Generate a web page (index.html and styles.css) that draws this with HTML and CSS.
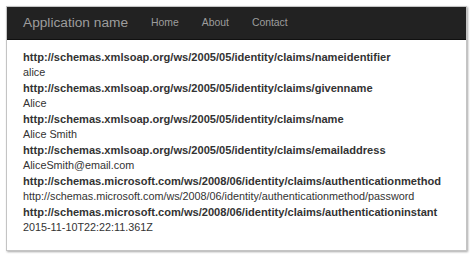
FILE: index.html
```html
<!DOCTYPE html>
<html>
<head>
<meta charset="utf-8">
<link rel="stylesheet" href="styles.css">
</head>
<body>
<div class="window">
  <nav class="navbar">
    <span class="brand">Application name</span>
    <ul class="nav">
      <li>Home</li>
      <li>About</li>
      <li>Contact</li>
    </ul>
  </nav>
  <dl class="claims">
    <dt>http://schemas.xmlsoap.org/ws/2005/05/identity/claims/nameidentifier</dt>
    <dd>alice</dd>
    <dt>http://schemas.xmlsoap.org/ws/2005/05/identity/claims/givenname</dt>
    <dd>Alice</dd>
    <dt>http://schemas.xmlsoap.org/ws/2005/05/identity/claims/name</dt>
    <dd>Alice Smith</dd>
    <dt>http://schemas.xmlsoap.org/ws/2005/05/identity/claims/emailaddress</dt>
    <dd>AliceSmith@email.com</dd>
    <dt>http://schemas.microsoft.com/ws/2008/06/identity/claims/authenticationmethod</dt>
    <dd>http://schemas.microsoft.com/ws/2008/06/identity/authenticationmethod/password</dd>
    <dt>http://schemas.microsoft.com/ws/2008/06/identity/claims/authenticationinstant</dt>
    <dd>2015-11-10T22:22:11.361Z</dd>
  </dl>
</div>
</body>
</html>
```

FILE: styles.css
```css
html, body {
  margin: 0;
  padding: 0;
  background: #ffffff;
}
body {
  padding: 6px;
  font-family: "Liberation Sans", Arial, sans-serif;
}
.window {
  box-sizing: border-box;
  width: 461px;
  height: 245px;
  border: 1px solid #c4c4c4;
  box-shadow: 1px 1px 2px rgba(0, 0, 0, 0.35);
  background: #fff;
  overflow: hidden;
}
.navbar {
  display: flex;
  align-items: center;
  height: 33px;
  background: #222222;
  border-bottom: 1px solid #101010;
  box-sizing: border-box;
  padding: 0 16px 2px 16px;
}
.brand {
  font-size: 13.7px;
  color: #9d9d9d;
  margin-right: 23px;
}
.nav {
  display: flex;
  gap: 23px;
  list-style: none;
  margin: 0;
  padding: 0;
  font-size: 10.4px;
  color: #9d9d9d;
}
.claims {
  margin: 0;
  padding: 10px 16px 0 16px;
  font-size: 10.8px;
  line-height: 15.45px;
  color: #333333;
}
.claims dt {
  font-weight: bold;
  font-size: 11.1px;
}
.claims dd {
  margin: 0;
}
```
